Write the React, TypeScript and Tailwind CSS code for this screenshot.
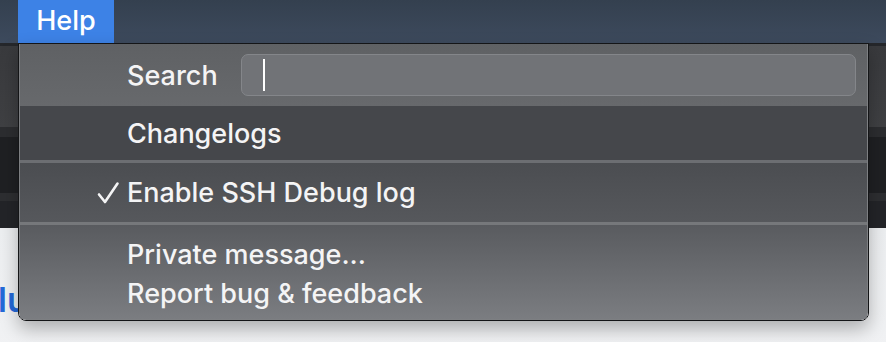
import React from "react";

const FONT = { fontFamily: "Inter, 'Noto Sans', 'Liberation Sans', sans-serif" };

function CheckMark() {
  return (
    <svg width="24" height="24" viewBox="0 0 24 24" className="shrink-0" aria-hidden="true">
      <path d="M3 13.5 L9 21 L21.5 2.5" fill="none" stroke="#f4f4f5" strokeWidth="2.6" strokeLinecap="round" strokeLinejoin="round" />
    </svg>
  );
}

function HelpMenu() {
  return (
    <div className="absolute left-[18px] top-[43px] w-[851px] h-[278px] rounded-b-[8px] border border-[#141517] shadow-[0_8px_18px_rgba(0,0,0,0.28)] overflow-hidden">
      <div className="flex h-full flex-col rounded-b-[7px] border-x border-b border-[#7d7f82] text-[#f4f4f5] text-[27px] font-medium leading-none">
        {/* search */}
        <div className="flex h-[62px] shrink-0 items-center bg-gradient-to-b from-[#5f6164] to-[#67696c] pr-[11px]">
          <span className="w-[221px] pl-[107px]">Search</span>
          <div className="flex h-[42px] flex-1 items-center rounded-[7px] border border-[#84868a] bg-[#717377] pl-[21px]">
            <span className="h-[32px] w-[2px] bg-white" />
          </div>
        </div>

        {/* highlighted item */}
        <div className="flex h-[54px] shrink-0 items-center bg-[#45474b] pl-[107px]">Changelogs</div>
        <div className="h-[3px] shrink-0 bg-[#6c6e72]" />

        {/* checked item */}
        <div className="flex h-[59px] shrink-0 items-center bg-gradient-to-b from-[#4b4d51] to-[#56585c] pl-[76px]">
          <CheckMark />
          <span className="ml-[7px]">Enable SSH Debug log</span>
        </div>
        <div className="h-[3px] shrink-0 bg-[#76787b]" />

        {/* plain items */}
        <div className="flex flex-1 flex-col bg-gradient-to-b from-[#595b5f] to-[#7b7d81] pl-[107px] pt-[16px] gap-[12px]">
          <span>Private message...</span>
          <span>Report bug &amp; feedback</span>
        </div>
      </div>
    </div>
  );
}

export default function App() {
  return (
    <div className="relative h-[342px] w-[886px] overflow-hidden bg-[#eff0f2]" style={FONT}>
      {/* menu bar */}
      <div className="flex h-[43px] bg-gradient-to-b from-[#34404f] to-[#3d4a5d]">
        <div className="ml-[18px] flex w-[96px] items-center justify-center bg-[#3d82e6] pb-[1px] text-[27px] font-medium text-white">
          Help
        </div>
      </div>

      {/* window underneath */}
      <div className="flex flex-col">
        <div className="h-[3px] bg-[#25272b]" />
        <div className="h-[81px] bg-gradient-to-b from-[#393a3d] to-[#3f4043]" />
        <div className="h-[10px] bg-[#2c2d30]" />
        <div className="h-[56px] bg-[#1f2023]" />
        <div className="h-[8px] bg-[#2d2e31]" />
        <div className="h-[27px] bg-[#232428]" />
        <div className="flex h-[130px] items-start bg-gradient-to-b from-[#eceef0] to-[#f1f2f4] pt-[55px]">
          <span className="-ml-[2px] text-[34px] font-semibold leading-none text-[#2468d8]">lu</span>
        </div>
      </div>

      <HelpMenu />
    </div>
  );
}
